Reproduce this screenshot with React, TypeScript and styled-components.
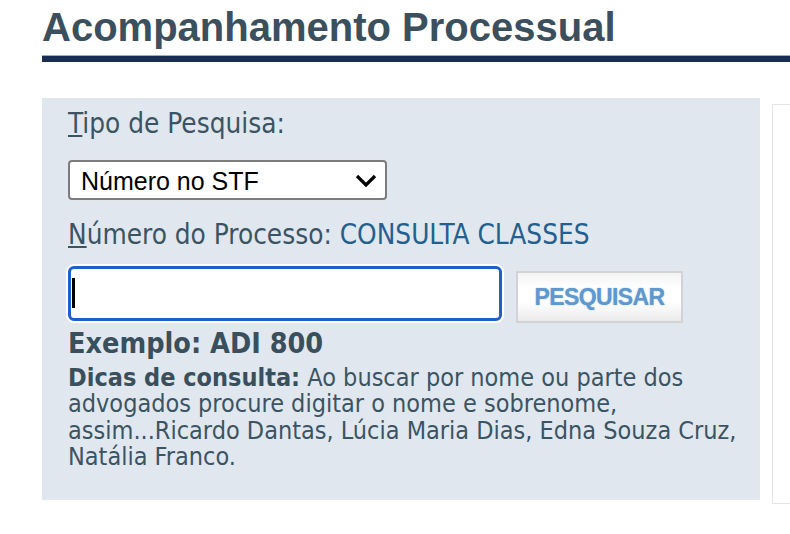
import React from "react";
import styled, { createGlobalStyle } from "styled-components";

const Global = createGlobalStyle`
  html, body { margin: 0; padding: 0; background: #ffffff; }
  body { width: 790px; height: 534px; overflow: hidden; }
`;

const Page = styled.div`
  padding: 5px 0 0 42px;
  font-family: "DejaVu Sans Condensed", "DejaVu Sans", Tahoma, sans-serif;
`;

const Title = styled.h1`
  margin: 0;
  font-family: "Liberation Sans", Arial, sans-serif;
  font-weight: 700;
  font-size: 40px;
  line-height: 44px;
  color: #3b4f5d;
`;

const Rule = styled.div`
  margin-top: 6px;
  height: 6px;
  border-top: 1px solid #a3adb8;
  background: #1a2d55;
`;

const Row = styled.div`
  display: flex;
  align-items: flex-start;
  gap: 12px;
  margin-top: 36px;
`;

const SearchPanel = styled.div`
  width: 718px;
  box-sizing: border-box;
  background: #e1e7ee;
  padding: 10px 20px 30px 26px;
  color: #3b5464;
`;

const SidePanel = styled.div`
  flex: 1;
  height: 398px;
  margin-top: 6px;
  border: 1px solid #e2e4e7;
  border-right: none;
`;

const Label = styled.div<{ $gap?: number }>`
  font-size: 27.7px;
  line-height: 32px;
  margin-bottom: ${(p) => p.$gap ?? 0}px;
`;

const Link = styled.a`
  color: #23608f;
  text-decoration: none;
`;

const SelectWrap = styled.div`
  position: relative;
  width: 319px;
  height: 40px;
  margin-bottom: 19px;
`;

const Select = styled.select`
  appearance: none;
  width: 100%;
  height: 100%;
  box-sizing: border-box;
  border: 2px solid #7c7c7c;
  border-radius: 4px;
  background: #ffffff;
  padding: 2px 0 0 11px;
  font-family: "Liberation Sans", Arial, sans-serif;
  font-size: 25px;
  color: #000000;
  outline: none;
`;

const Chevron = styled.svg`
  position: absolute;
  right: 10px;
  top: 14px;
  pointer-events: none;
`;

const SearchRow = styled.div`
  display: flex;
  align-items: flex-start;
  gap: 14px;
  margin-top: 15px;
`;

const InputWrap = styled.div`
  position: relative;
`;

const Input = styled.input`
  width: 434px;
  height: 55px;
  box-sizing: border-box;
  border: 3px solid #1f5fc9;
  border-radius: 6px;
  box-shadow: 0 0 0 2px #ffffff;
  background: #ffffff;
  outline: none;
  padding: 0 6px;
  font-size: 21px;
`;

const Caret = styled.span`
  position: absolute;
  left: 4px;
  top: 12px;
  width: 3px;
  height: 30px;
  background: #000000;
`;

const Button = styled.button`
  margin-top: 5px;
  width: 167px;
  height: 52px;
  box-sizing: border-box;
  border: 2px solid #d3d3d3;
  background: linear-gradient(#f2f2f2, #ffffff 30%, #ffffff 60%, #eaeaea);
  font-family: "Liberation Sans", Arial, sans-serif;
  font-weight: 700;
  font-size: 23px;
  letter-spacing: -0.6px;
  color: #5e98cf;
  text-shadow: 0 0 1.5px rgba(94, 152, 207, 0.7);
  cursor: pointer;
  padding: 0;
`;

const Example = styled.div`
  margin-top: 6px;
  font-weight: 700;
  font-size: 28.5px;
  line-height: 30px;
  color: #3a4f5c;
`;

const Tips = styled.p`
  margin: 0;
  padding-top: 6px;
  font-size: 25px;
  line-height: 26.3px;
`;

const Strong = styled.strong`
  color: #3a4f5c;
`;

export default function App() {
  return (
    <>
      <Global />
      <Page>
        <Title>Acompanhamento Processual</Title>
        <Rule />
        <Row>
          <SearchPanel>
            <Label $gap={20}>
              <u>T</u>ipo de Pesquisa:
            </Label>
            <SelectWrap>
              <Select defaultValue="stf">
                <option value="stf">Número no STF</option>
              </Select>
              <Chevron width="22" height="13" viewBox="0 0 22 13">
                <path d="M2 2 L11 11 L20 2" fill="none" stroke="#000" strokeWidth="3.2" />
              </Chevron>
            </SelectWrap>
            <Label>
              <u>N</u>úmero do Processo: <Link href="#">CONSULTA CLASSES</Link>
            </Label>
            <SearchRow>
              <InputWrap>
                <Input type="text" />
                <Caret />
              </InputWrap>
              <Button>PESQUISAR</Button>
            </SearchRow>
            <Example>Exemplo: ADI 800</Example>
            <Tips>
              <Strong>Dicas de consulta:</Strong> Ao buscar por nome ou parte dos advogados procure
              digitar o nome e sobrenome, assim...Ricardo Dantas, Lúcia Maria Dias, Edna Souza Cruz,
              Natália Franco.
            </Tips>
          </SearchPanel>
          <SidePanel />
        </Row>
      </Page>
    </>
  );
}
